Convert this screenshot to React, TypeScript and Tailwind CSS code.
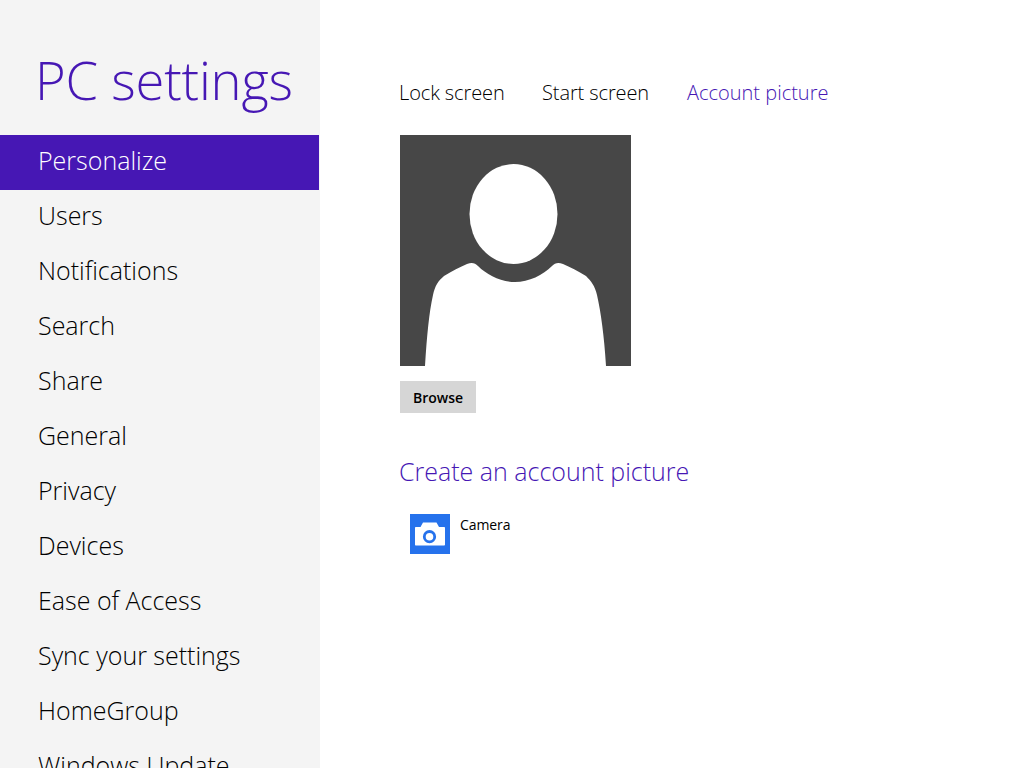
const navItems = [
	"Personalize",
	"Users",
	"Notifications",
	"Search",
	"Share",
	"General",
	"Privacy",
	"Devices",
	"Ease of Access",
	"Sync your settings",
	"HomeGroup",
	"Windows Update",
];

const Avatar = () => (
	<svg width="231" height="231" viewBox="0 0 231 231" className="block">
		<rect width="231" height="231" fill="#474747" />
		<ellipse cx="113.5" cy="79" rx="44" ry="50" fill="#fff" />
		<path
			d="M25 231C27 200 29 178 33 160C35 151 38 146 44 141C52 136 60 132 67 129C72 127 75 128 78 131C87 140 101 147 115 147C129 147 143 140 152 131C155 128 158 127 163 129C170 132 178 136 186 141C191 146 195 151 197 160C201 178 204 200 206 231Z"
			fill="#fff"
		/>
	</svg>
);

const CameraTile = () => (
	<svg width="40" height="40" viewBox="0 0 40 40" className="block shrink-0">
		<rect width="40" height="40" fill="#2672ec" />
		<path
			d="M6 13H10.500L13 8.500H26.500L29 13H34C34.600 13 35 13.400 35 14V30.500C35 31.100 34.600 31.500 34 31.500H6C5.400 31.500 5 31.100 5 30.500V14C5 13.400 5.400 13 6 13Z"
			fill="#fff"
		/>
		<circle cx="19.500" cy="22.700" r="5.200" fill="#fff" stroke="#2672ec" strokeWidth="2.800" />
	</svg>
);

export default function App() {
	return (
		<div className="flex h-[768px] overflow-hidden bg-white font-['Open_Sans',sans-serif] font-light">
			{/* Sidebar */}
			<div className="w-[320px] shrink-0 bg-[#f4f4f4] overflow-hidden">
				<h1 className="h-[135px] pl-[35px] pt-[41px] text-[52.5px] leading-[78px] font-light text-[#4617b4] tracking-[-0.2px]">PC settings</h1>
				{navItems.map((item, i) => (
					<div
						key={item}
						className={
							"w-[319px] h-[55px] pl-[38px] pb-[4px] flex items-center text-[25px] whitespace-nowrap " +
							(i === 0 ? "bg-[#4617b4] text-white" : "text-black")
						}
					>
						{item}
					</div>
				))}
			</div>

			{/* Content */}
			<div className="flex-1 pl-[80px]">
				<div className="flex h-[135px] pt-[77px] text-[20px] leading-[32px] text-black">
					<span className="w-[143px] -ml-[1px] tracking-[-0.1px]">Lock screen</span>
					<span className="w-[145px] tracking-[-0.1px]">Start screen</span>
					<span className="text-[#4617b4]">Account picture</span>
				</div>
				<Avatar />
				<button className="mt-[15px] block w-[76px] h-[32px] bg-[#d6d6d6] text-[14px] font-semibold text-black">Browse</button>
				<h2 className="mt-[40px] -ml-[1px] text-[25px] leading-[36px] font-light text-[#4617b4]">Create an account picture</h2>
				<div className="mt-[25px] ml-[10px] flex gap-[10px]">
					<CameraTile />
					<span className="text-[14px] leading-[22px] font-normal text-black tracking-[-0.1px]">Camera</span>
				</div>
			</div>
		</div>
	);
}
